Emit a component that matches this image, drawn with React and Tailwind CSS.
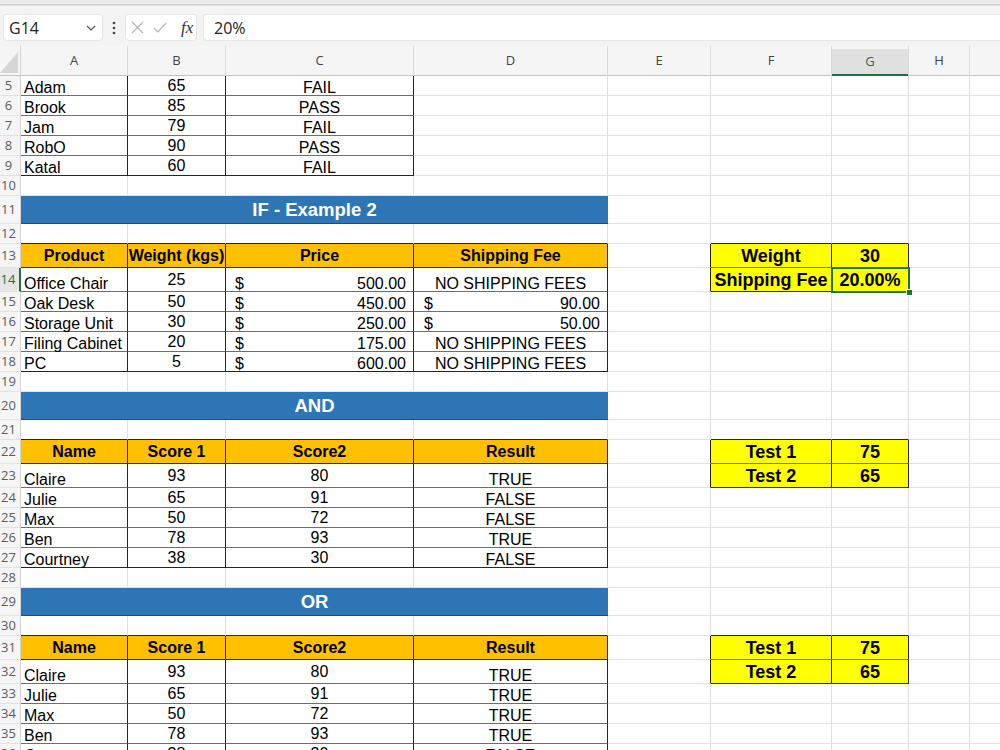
import React from 'react';

const WCLS = ['w-[107px]', 'w-[98px]', 'w-[188px]', 'w-[194px]', 'w-[103px]', 'w-[121px]', 'w-[77px]', 'w-[61px]', 'w-[40px]'];
const LETTERS = ['A', 'B', 'C', 'D', 'E', 'F', 'G', 'H', ''];
const RCLS = { g: 'border-r-[#e1e1e1]', d: 'border-r-[#262626]' };
const BCLS = { g: 'border-b-[#e1e1e1]', d: 'border-b-[#262626]', m: 'border-b-[#6e6e6e]' };
const BGCLS = { o: 'bg-[#ffc000]', y: 'bg-[#ffff00]', n: '' };
const HCLS = { 20: 'h-[20px]', 24: 'h-[24px]', 28: 'h-[28px]' };

const blank = () => Array.from({ length: 9 }, () => ({}));
const rows = [];

const addBox = (c, [a, b], bb) => {
  c[4].r = 'd';
  c[5] = { t: a, al: 'c', y: true, bg: 'y', r: 'd', bb, v: 'c' };
  c[6] = { t: b, al: 'c', y: true, bg: 'y', r: 'd', bb, v: 'c' };
};
const preTable = (n, box) => {
  const c = blank();
  for (let i = 0; i < 4; i++) c[i].bb = 'd';
  if (box) {
    c[5].bb = 'd';
    c[6].bb = 'd';
  }
  return { n, h: 20, c };
};
const header = (n, labels, box) => {
  const c = blank();
  labels.forEach((t, i) => {
    c[i] = { t, al: 'c', b: true, bg: 'o', r: 'd', bb: 'd', v: 'c' };
  });
  if (box) addBox(c, box, 'm');
  return { n, h: 24, c };
};

// Rows 5-9
[['Adam', 65, 'FAIL'], ['Brook', 85, 'PASS'], ['Jam', 79, 'FAIL'], ['RobO', 90, 'PASS'], ['Katal', 60, 'FAIL']].forEach((d, i) => {
  const c = blank();
  const bb = i === 4 ? 'd' : 'm';
  c[0] = { t: d[0], al: 'l', r: 'd', bb };
  c[1] = { t: String(d[1]), al: 'c', r: 'd', bb, v: 'c' };
  c[2] = { t: d[2], al: 'c', r: 'd', bb };
  rows.push({ n: 5 + i, h: 20, c });
});
rows.push({ n: 10, h: 20, c: blank() });
rows.push({ n: 11, h: 28, c: blank(), merge: 'IF - Example 2' });
rows.push(preTable(12, true));
rows.push(header(13, ['Product', 'Weight (kgs)', 'Price', 'Shipping Fee'], ['Weight', '30']));
[
  ['Office Chair', 25, '500.00', null],
  ['Oak Desk', 50, '450.00', '90.00'],
  ['Storage Unit', 30, '250.00', '50.00'],
  ['Filing Cabinet', 20, '175.00', null],
  ['PC', 5, '600.00', null],
].forEach((d, i) => {
  const c = blank();
  const bb = i === 4 ? 'd' : 'm';
  c[0] = { t: d[0], al: 'l', r: 'd', bb };
  c[1] = { t: String(d[1]), al: 'c', r: 'd', bb, v: 'c' };
  c[2] = { acct: d[2], ap: 'c', r: 'd', bb };
  c[3] = d[3] ? { acct: d[3], ap: 'd', r: 'd', bb } : { t: 'NO SHIPPING FEES', al: 'c', r: 'd', bb };
  if (i === 0) {
    addBox(c, ['Shipping Fee', '20.00%'], 'd');
    c[6].sel = true;
  }
  rows.push({ n: 14 + i, h: i === 0 ? 24 : 20, c });
});
rows.push({ n: 19, h: 20, c: blank() });
rows.push({ n: 20, h: 28, c: blank(), merge: 'AND' });
rows.push(preTable(21, true));

const scoreTable = (start, data, count) => {
  rows.push(header(start, ['Name', 'Score 1', 'Score2', 'Result'], ['Test 1', '75']));
  data.slice(0, count).forEach((d, i) => {
    const c = blank();
    const bb = i === data.length - 1 ? 'd' : 'm';
    c[0] = { t: d[0], al: 'l', r: 'd', bb };
    c[1] = { t: String(d[1]), al: 'c', r: 'd', bb, v: 'c' };
    c[2] = { t: String(d[2]), al: 'c', r: 'd', bb, v: 'c' };
    c[3] = { t: d[3], al: 'c', r: 'd', bb };
    if (i === 0) addBox(c, ['Test 2', '65'], 'd');
    rows.push({ n: start + 1 + i, h: i === 0 ? 24 : 20, c });
  });
};

scoreTable(22, [
  ['Claire', 93, 80, 'TRUE'],
  ['Julie', 65, 91, 'FALSE'],
  ['Max', 50, 72, 'FALSE'],
  ['Ben', 78, 93, 'TRUE'],
  ['Courtney', 38, 30, 'FALSE'],
], 5);
rows.push({ n: 28, h: 20, c: blank() });
rows.push({ n: 29, h: 28, c: blank(), merge: 'OR' });
rows.push(preTable(30, true));
scoreTable(31, [
  ['Claire', 93, 80, 'TRUE'],
  ['Julie', 65, 91, 'TRUE'],
  ['Max', 50, 72, 'TRUE'],
  ['Ben', 78, 93, 'TRUE'],
  ['Courtney', 38, 30, 'FALSE'],
], 5);

function Cell({ idx, c }) {
  const r = RCLS[c.r || 'g'];
  const b = BCLS[c.bb || 'g'];
  const bg = BGCLS[c.bg || 'n'];
  const size = c.y ? 'text-[18px] font-bold' : c.b ? 'text-[16px] font-bold' : 'text-[16px]';
  const valign = c.v === 'c' ? 'items-center leading-[18px]' : 'items-end leading-[15px]';
  let just = 'justify-center';
  if (c.al === 'l') just = 'justify-start pl-[3px]';
  if (c.acct) just = c.ap === 'c' ? 'justify-between pl-[9px] pr-[7px]' : 'justify-between pl-[10px] pr-[7px]';
  return (
    <div className={`${WCLS[idx]} shrink-0 relative flex border-r border-b ${r} ${b} ${bg} ${valign} ${just} ${size} text-black`}>
      {c.acct ? (
        <>
          <span>$</span>
          <span>{c.acct}</span>
        </>
      ) : (
        <span className="whitespace-nowrap">{c.t}</span>
      )}
      {c.sel && (
        <>
          <div className="absolute -left-[1px] -top-[1px] w-[79px] h-[26px] border-2 border-[#1e7145] z-10" />
          <div className="absolute left-[74px] top-[21px] w-[7px] h-[7px] bg-[#1e7145] border border-white z-20" />
        </>
      )}
    </div>
  );
}

function Row({ row }) {
  const sel = row.n === 14;
  return (
    <div className={`flex ${HCLS[row.h]}`}>
      <div
        className={`w-[21px] shrink-0 flex items-center justify-center pr-[3px] text-[13px] font-['Open_Sans',sans-serif] border-b border-b-[#e1e1e1] ${
          sel ? 'bg-[#e6e6e6] text-[#1e7145] border-r-2 border-r-[#1e7145]' : 'bg-[#f5f5f5] text-[#5c5c5c] border-r border-r-[#d4d4d4]'
        }`}
      >
        {row.n}
      </div>
      {row.merge ? (
        <>
          <div className="w-[587px] shrink-0 flex items-center justify-center bg-[#2e75b6] border-b border-b-[#1f4e79] text-white font-bold text-[18.5px]">
            {row.merge}
          </div>
          {row.c.slice(4).map((c, i) => (
            <Cell key={i + 4} idx={i + 4} c={c} />
          ))}
        </>
      ) : (
        row.c.map((c, i) => <Cell key={i} idx={i} c={c} />)
      )}
    </div>
  );
}

function TopBar() {
  return (
    <>
      <div className="h-[4px] bg-[#ebebeb]" />
      <div className="h-[1px] bg-[#cdcdcd]" />
      <div className="h-[1px] bg-[#e2e2e2]" />
      <div className="h-[40px] bg-[#f3f3f3] flex items-start pt-[8px] pl-[3px] font-['Open_Sans',sans-serif]">
        <div className="w-[100px] h-[27px] shrink-0 bg-white rounded-[4px] border border-[#e6e6e6] flex items-center justify-between pl-[5px] pr-[6px]">
          <span className="text-[16px] text-[#222]">G14</span>
          <svg width="10" height="6" viewBox="0 0 10 6">
            <path d="M1 1 L5 5 L9 1" fill="none" stroke="#555" strokeWidth="1.2" />
          </svg>
        </div>
        <div className="w-[22px] h-[27px] shrink-0 flex items-center justify-center">
          <svg width="4" height="14" viewBox="0 0 4 14">
            <circle cx="2" cy="2" r="1.3" fill="#444" />
            <circle cx="2" cy="7" r="1.3" fill="#444" />
            <circle cx="2" cy="12" r="1.3" fill="#444" />
          </svg>
        </div>
        <div className="w-[72px] h-[27px] shrink-0 bg-white rounded-[4px] border border-[#e6e6e6] flex items-center pl-[5px]">
          <svg width="13" height="13" viewBox="0 0 13 13">
            <path d="M1 1 L12 12 M12 1 L1 12" stroke="#b4b4b4" strokeWidth="1.2" />
          </svg>
          <svg width="14" height="11" viewBox="0 0 14 11" className="ml-[9px]">
            <path d="M1 6 L5 10 L13 1" fill="none" stroke="#b4b4b4" strokeWidth="1.2" />
          </svg>
          <span className="ml-[14px] text-[17px] italic text-[#333] font-['Liberation_Serif',serif] leading-none">fx</span>
        </div>
        <div className="ml-[6px] flex-1 h-[27px] bg-white rounded-l-[4px] border border-r-0 border-[#e6e6e6] flex items-center pl-[10px]">
          <span className="text-[16px] text-[#222]">20%</span>
        </div>
      </div>
    </>
  );
}

function ColumnHeader() {
  return (
    <div className="flex h-[30px] bg-[#f5f5f5] font-['Open_Sans',sans-serif] text-[13px]">
      <div className="w-[21px] shrink-0 border-r border-b border-r-[#d4d4d4] border-b-[#c4c4c4] flex items-end">
        <svg width="20" height="29" viewBox="0 0 20 29">
          <polygon points="18,6 18,27 0,27" fill="#d6d6d6" />
        </svg>
      </div>
      {LETTERS.map((l, i) =>
        l === 'G' ? (
          <div key={i} className={`${WCLS[i]} shrink-0 flex flex-col border-r border-r-[#dadada]`}>
            <div className="h-[3px]" />
            <div className="flex-1 bg-[#e0e0e0] border-b-2 border-b-[#1e7145] flex items-center justify-center text-[#1e7145]">
              {l}
            </div>
          </div>
        ) : (
          <div
            key={i}
            className={`${WCLS[i]} shrink-0 flex items-center justify-center border-r border-b border-r-[#dadada] border-b-[#c4c4c4] text-[#444]`}
          >
            {l}
          </div>
        )
      )}
    </div>
  );
}

export default function App() {
  return (
    <div className="w-[1000px] h-[750px] overflow-hidden bg-white font-['Liberation_Sans',Arial,sans-serif]">
      <TopBar />
      <ColumnHeader />
      {rows.map((r) => (
        <Row key={r.n} row={r} />
      ))}
    </div>
  );
}
